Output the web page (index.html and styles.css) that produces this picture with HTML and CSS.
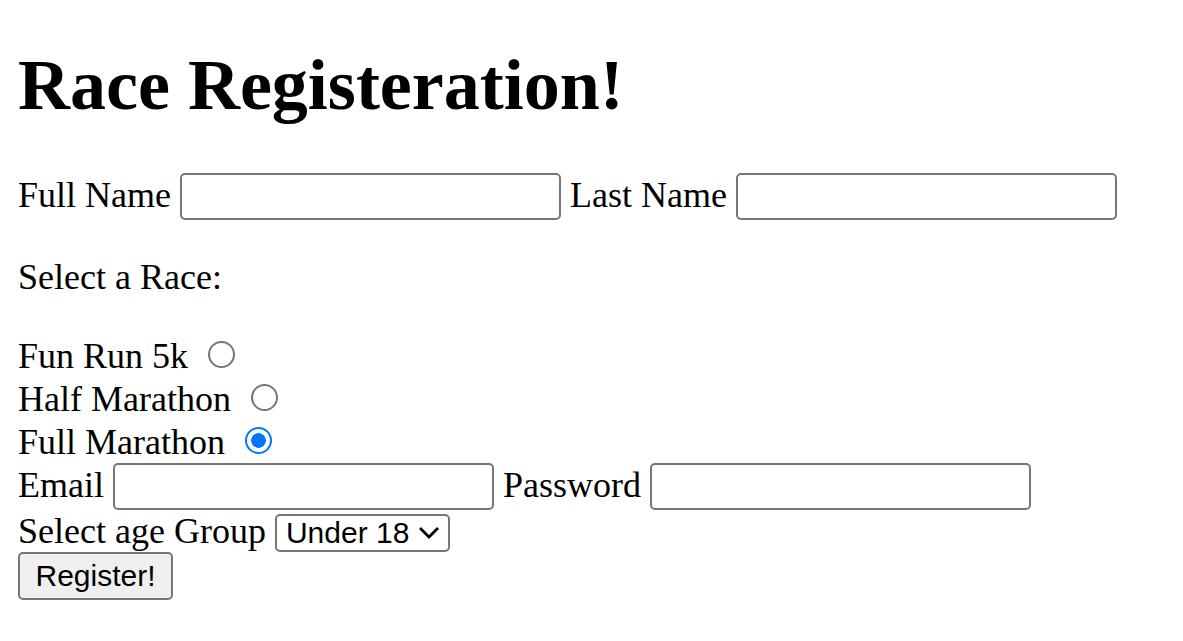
FILE: index.html
```html
<!DOCTYPE html>
<html lang="en">
<head>
    <meta charset="UTF-8">
    <meta name="viewport" content="width=device-width, initial-scale=1.0">
    <title>Race Registeration</title>
    <link rel="stylesheet" href="styles.css">
</head>
<body>
    <h1>Race Registeration!</h1>
    <form id="raceForm">
        <p>
            <label for="firstName">Full Name</label>
            <input type="text" id="firstName" name="firstName" class="field">
            <label for="lastName">Last Name</label>
            <input type="text" id="lastName" name="lastName" class="field">
        </p>

        <p>Select a Race:</p>

        <label for="funRun">Fun Run 5k</label>
        <input type="radio" id="funRun" name="race" value="5k" class="radio"><br>
        <label for="halfMarathon">Half Marathon</label>
        <input type="radio" id="halfMarathon" name="race" value="half" class="radio"><br>
        <label for="fullMarathon">Full Marathon</label>
        <input type="radio" id="fullMarathon" name="race" value="full" class="radio" checked><br>

        <label for="email">Email</label>
        <input type="email" id="email" name="email" class="field">
        <label for="password">Password</label>
        <input type="password" id="password" name="password" class="field"><br>

        <label for="ageGroup">Select age Group</label>
        <select id="ageGroup" name="ageGroup" class="select">
            <option value="under18">Under 18</option>
            <option value="18to35">18 - 35</option>
            <option value="36to50">36 - 50</option>
            <option value="over50">Over 50</option>
        </select><br>

        <button type="submit" class="button">Register!</button>
    </form>
</body>
</html>
```

FILE: styles.css
```css
body {
    font-family: "Liberation Serif", "Times New Roman", serif;
    font-size: 36px;
    color: #000;
    background-color: #fff;
    margin: 18px;
}

h1 {
    font-size: 72px;
    font-weight: bold;
    margin: 26px 0 46px;
}

p {
    margin: 36px 0;
}

.field {
    box-sizing: border-box;
    width: 381px;
    height: 47px;
    padding: 1px 4px;
    border: 2px solid #767676;
    border-radius: 5px;
    font-family: "Liberation Sans", Arial, sans-serif;
    font-size: 30px;
    background-color: #fff;
}

.radio {
    appearance: none;
    box-sizing: border-box;
    width: 27px;
    height: 27px;
    margin: 7px 7px 0 11px;
    border: 2px solid #767676;
    border-radius: 50%;
    background-color: #fff;
}

.radio:checked {
    border: 2.5px solid #0075ff;
    background: radial-gradient(circle, #0075ff 0 7px, #fff 7.6px);
}

.select {
    appearance: none;
    box-sizing: border-box;
    width: 175px;
    height: 38px;
    padding: 0 0 0 9px;
    border: 2px solid #767676;
    border-radius: 5px;
    font-family: "Liberation Sans", Arial, sans-serif;
    font-size: 30px;
    color: #000;
    background: #fff url("data:image/svg+xml,%3Csvg xmlns='http://www.w3.org/2000/svg' width='22' height='13' viewBox='0 0 22 13'%3E%3Cpath d='M2 2l9 9 9-9' fill='none' stroke='%23000' stroke-width='2.8'/%3E%3C/svg%3E") no-repeat right 8px center;
}

.button {
    box-sizing: border-box;
    width: 155px;
    height: 48px;
    padding: 0 12px;
    border: 2px solid #767676;
    border-radius: 5px;
    background-color: #efefef;
    font-family: "Liberation Sans", Arial, sans-serif;
    font-size: 30px;
    color: #000;
}
```
